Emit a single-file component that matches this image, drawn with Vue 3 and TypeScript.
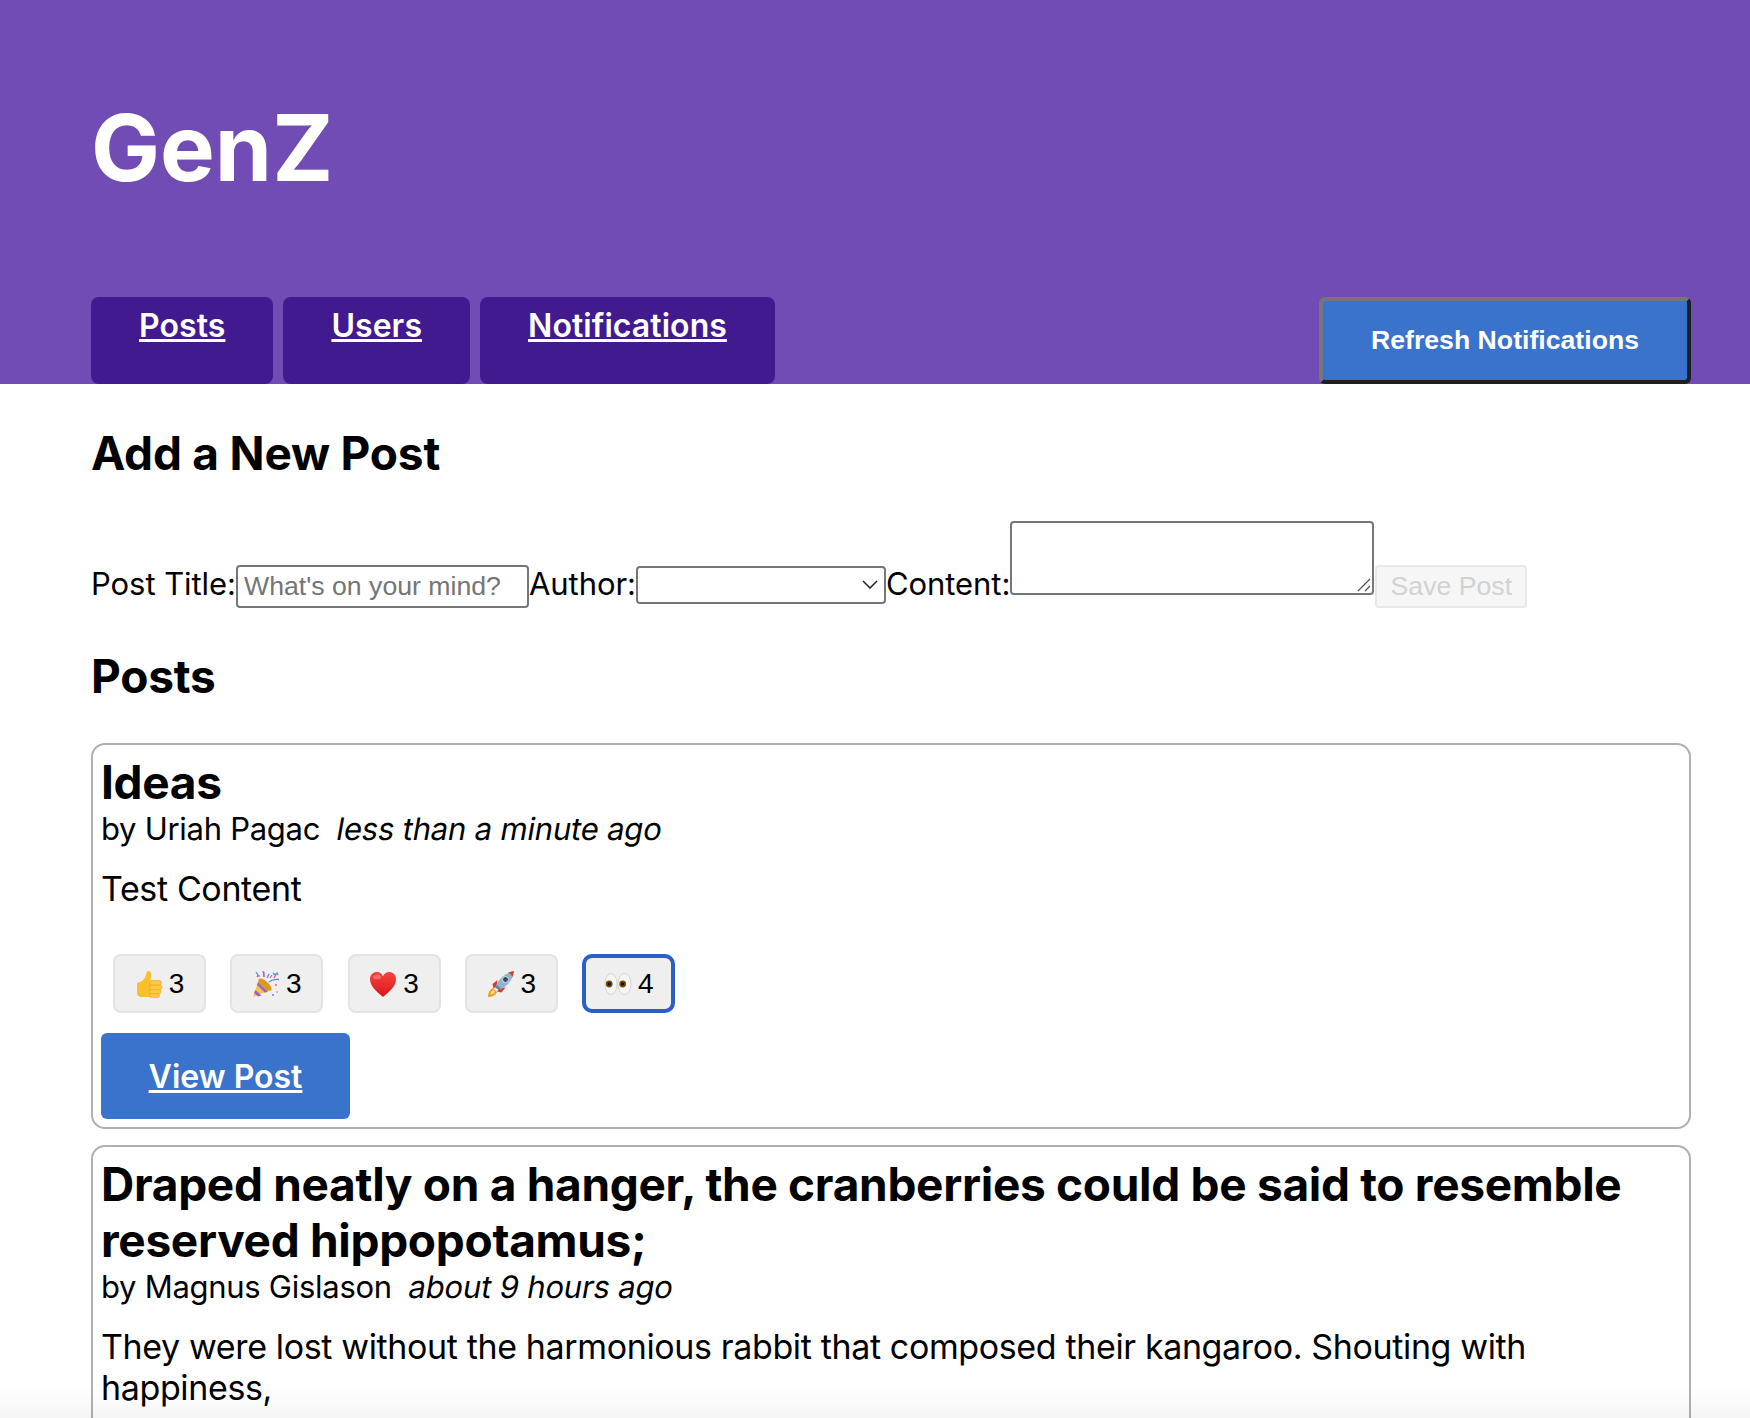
<script setup lang="ts">
interface Reaction { name: string; count: number; active?: boolean }
const reactions: Reaction[] = [
  { name: 'thumb', count: 3 },
  { name: 'tada', count: 3 },
  { name: 'heart', count: 3 },
  { name: 'rocket', count: 3 },
  { name: 'eyes', count: 4, active: true },
]
</script>

<template>
  <div class="page">
    <header class="top">
      <h1 class="brand">GenZ</h1>
      <nav class="nav">
        <div class="tabs">
          <a class="tab" href="#">Posts</a>
          <a class="tab" href="#">Users</a>
          <a class="tab" href="#">Notifications</a>
        </div>
        <button class="refresh" type="button">Refresh Notifications</button>
      </nav>
    </header>
    <main class="main">
      <h2 class="section add">Add a New Post</h2>
      <form class="form" @submit.prevent>
        <label>Post Title:</label><input class="title-input" type="text" placeholder="What's on your mind?" /><label>Author:</label><select class="author"><option></option></select><label>Content:</label><textarea class="content"></textarea><button class="save" type="button" disabled>Save Post</button>
      </form>
      <h2 class="section posts">Posts</h2>
      <article class="card">
        <h3 class="post-title">Ideas</h3>
        <div class="meta"><span>by Uriah Pagac</span><i class="ago">less than a minute ago</i></div>
        <p class="body">Test Content</p>
        <div class="reactions">
          <button v-for="r in reactions" :key="r.name" type="button" class="reaction" :class="{ active: r.active }">
            <svg v-if="r.name === 'thumb'" class="emoji" viewBox="0 0 28 28">
              <path d="M2 14c0-1 1-2 3-2 3-1 5-4 6-7 .5-3 1-4 2.500-4 2.500 0 3 3 2.500 6-.2 1.500-.7 3-.7 4H18v16H7c-3 0-5-1.500-5-4z" fill="#fbbf2d"/>
              <g fill="#fdc93f" stroke="#e9a51c" stroke-width=".6">
                <rect x="14.500" y="10.500" width="12" height="4.800" rx="2.400"/>
                <rect x="14.500" y="15.200" width="12.500" height="4.500" rx="2.200"/>
                <rect x="14.500" y="19.600" width="11.500" height="4.200" rx="2.100"/>
                <rect x="14.500" y="23.600" width="10" height="3.900" rx="1.900"/>
              </g>
            </svg>
            <svg v-else-if="r.name === 'tada'" class="emoji" viewBox="0 0 28 28">
              <path d="M1 27 7 9l12 11z" fill="#f6c63f"/>
              <path d="M3.500 20l6 5.500-3.500 1-4-3.500zM6 12l10 9.500-3 1.200L5 15z" fill="#9a62d6"/>
              <path d="M7 9c2-1.500 6 1 9 4s4.500 6 3 7.500c-2 1-6-1-9-4s-4.500-6-3-7.500z" fill="#d99a1f"/>
              <path d="M4 2l2 3-1 2M11 1l1 6M17 4l-2 4M21 3l2 2 2-2 1 2M17 12c3-2.500 6-3 10-2.500" stroke="#4b8fe6" stroke-width="1.300" fill="none"/>
              <path d="M12 2v5M20 5l-2 3M24 5l-2 3" stroke="#e85a77" stroke-width="1.200" fill="none"/>
              <circle cx="24" cy="15" r="1" fill="#e85a77"/><circle cx="25" cy="22" r="1" fill="#e8a0b0"/><circle cx="21" cy="25" r="1" fill="#4b8fe6"/><circle cx="7" cy="6" r=".9" fill="#e85a77"/>
            </svg>
            <svg v-else-if="r.name === 'heart'" class="emoji" viewBox="0 0 28 28">
              <defs><linearGradient id="hg" x1="0" y1="0" x2="0" y2="1"><stop offset="0" stop-color="#f7453f"/><stop offset="1" stop-color="#d9141e"/></linearGradient></defs>
              <path d="M14 27C7 21 1 16 1 9c0-4.500 3.500-7 7-7 2.700 0 5 1.700 6 4.300C15 3.700 17.300 2 20 2c3.500 0 7 2.500 7 7 0 7-6 12-13 18z" fill="url(#hg)"/>
              <ellipse cx="8" cy="7" rx="4" ry="2.300" fill="#fb8a86" opacity=".6"/>
            </svg>
            <svg v-else-if="r.name === 'rocket'" class="emoji" viewBox="0 0 28 28">
              <path d="M1 27c0-5 2.500-8 5-9l4 4c-1 2.500-4 5-9 5z" fill="#f59a23"/>
              <path d="M3.500 24.500c0-2.500 1.500-4 3-4.500l1.500 1.500c-.5 1.500-2 3-4.500 3z" fill="#fde27a"/>
              <path d="M5.500 14l5-4-1 6.500-3 2zM14.500 22.500l4-5-6.500 1-2 3z" fill="#dc3a2c"/>
              <path d="M8.500 17.500C11 9 18 3 27 1c-1 9-7 15.500-15 19z" fill="#90b4d2"/>
              <path d="M21 2.500c2 .8 3.600 2.500 4.500 4.500L27 1z" fill="#dc3a2c"/>
              <path d="M8.500 17.500l3.500 2.500 2-1L10 15z" fill="#5d7fa0"/>
              <circle cx="18.500" cy="9.500" r="3" fill="#3a465e" stroke="#dce8f2" stroke-width="1"/>
            </svg>
            <svg v-else class="emoji" viewBox="0 0 28 28">
              <ellipse cx="7" cy="14" rx="6" ry="10.500" fill="#f5f5f3" stroke="#c8c8c4" stroke-width=".7"/>
              <ellipse cx="20.500" cy="14" rx="6.500" ry="10.500" fill="#f5f5f3" stroke="#c8c8c4" stroke-width=".7"/>
              <circle cx="5.200" cy="14" r="3.400" fill="#7a4a14"/><circle cx="18.700" cy="14" r="3.400" fill="#7a4a14"/>
              <circle cx="5.200" cy="14" r="1.800" fill="#111"/><circle cx="18.700" cy="14" r="1.800" fill="#111"/>
            </svg>
            <span class="count">{{ r.count }}</span>
          </button>
        </div>
        <a class="view" href="#">View Post</a>
      </article>
      <article class="card second">
        <h3 class="post-title">Draped neatly on a hanger, the cranberries could be said to resemble reserved hippopotamus;</h3>
        <div class="meta"><span>by Magnus Gislason</span><i class="ago">about 9 hours ago</i></div>
        <p class="body">They were lost without the harmonious rabbit that composed their kangaroo. Shouting with happiness,</p>
      </article>
    </main>
    <div class="fade"></div>
  </div>
</template>

<style>
html, body { margin: 0; padding: 0; background: #fff; overflow: hidden; }
</style>

<style scoped>
.page {
  position: relative;
  height: 1418px;
  overflow: hidden;
  font-family: Inter, "Liberation Sans", sans-serif;
  color: #000;
  font-size: 32px;
}
.top {
  background: #704cb4;
  height: 384px;
  padding: 0 59px 0 91px;
  box-sizing: border-box;
  display: flex;
  flex-direction: column;
}
.brand {
  margin: 0;
  height: 297px;
  box-sizing: border-box;
  padding-top: 96px;
  font-size: 92px;
  line-height: 103px;
  font-weight: 700;
  color: #fff;
}
.nav { display: flex; justify-content: space-between; height: 87px; }
.tabs { display: flex; gap: 10px; }
.tab {
  background: #421a90;
  color: #fff;
  font-weight: 600;
  font-size: 32px;
  line-height: 38px;
  letter-spacing: 0.06px;
  padding: 10px 48px 0;
  border-radius: 8px;
  height: 87px;
  box-sizing: border-box;
}
.refresh {
  width: 372px;
  height: 87px;
  background: #3973cc;
  color: #fff;
  font: 700 26.67px "Liberation Sans", Arial, sans-serif;
  border: 4px solid;
  border-color: #767676 #1f1f1f #1f1f1f #767676;
  border-radius: 6px;
  padding: 0;
}
.main { padding: 0 59px 0 91px; }
.section { margin: 0; font-size: 46px; font-weight: 700; line-height: 56px; letter-spacing: -0.2px; }
.add { padding-top: 41px; }
.form { display: block; margin-top: 40px; height: 88px; white-space: nowrap; line-height: 40px; }
.form label { font-size: 31px; letter-spacing: -0.06px; }
.title-input {
  width: 293px; height: 43px; box-sizing: border-box; font: 26.67px "Liberation Sans", Arial, sans-serif;
  padding: 1px 6px; border: 2px solid #767676; border-radius: 4px; vertical-align: baseline; margin: 0;
}
.title-input::placeholder { color: #757575; }
.author {
  width: 250px; height: 38px; box-sizing: border-box; border: 2px solid #767676; border-radius: 4px; margin: 0;
  vertical-align: 6px;
  appearance: none;
  background: #fff url("data:image/svg+xml,%3Csvg xmlns='http://www.w3.org/2000/svg' width='16' height='9' viewBox='0 0 16 9'%3E%3Cpath d='M1 1l7 7 7-7' fill='none' stroke='%23222' stroke-width='1.500'/%3E%3C/svg%3E") no-repeat right 6px center;
}
.content {
  width: 364px; height: 74px; box-sizing: border-box; border: 2px solid #767676; border-radius: 4px; margin: 0; vertical-align: baseline;
  resize: none;
  background: #fff url("data:image/svg+xml,%3Csvg xmlns='http://www.w3.org/2000/svg' width='14' height='14' viewBox='0 0 14 14'%3E%3Cpath d='M1 13L13 1M8 13l5-5' fill='none' stroke='%23555' stroke-width='1.300'/%3E%3C/svg%3E") no-repeat right 1px bottom 1px;
}
.save {
  width: 152px; height: 43px; box-sizing: border-box; font: 26.67px "Liberation Sans", Arial, sans-serif;
  color: #d2d2d2; background: #f6f6f6; border: 2px solid #e8e8e8; border-radius: 4px; padding: 0; margin: 0 0 0 1px; vertical-align: baseline;
}
.posts { margin-top: 39px; }
.card {
  margin-top: 39px;
  border: 2px solid #b0b0b0;
  border-radius: 14px;
  padding: 9px 8px 8px;
  box-sizing: border-box;
}
.second { margin-top: 16px; min-height: 400px; }
.post-title { margin: 0; font-size: 46px; line-height: 56px; font-weight: 700; letter-spacing: -0.3px; }
.meta { font-size: 31px; line-height: 36px; display: flex; gap: 17px; margin-top: 1px; letter-spacing: -0.28px; }
.ago { font-style: normal; display: block; transform: skewX(-10deg); letter-spacing: -0.18px; }
.body { margin: 21px 0 0; font-size: 34px; line-height: 41px; letter-spacing: -0.37px; }
.reactions { display: flex; gap: 24.3px; margin: 45px 0 0; padding-left: 12px; }
.reaction {
  width: 93px; height: 59px; box-sizing: border-box; background: #efeff0; border: 2px solid #e2e2e8; border-radius: 8px;
  display: flex; align-items: center; justify-content: center; gap: 6px; padding: 0;
  font: 28px "Liberation Sans", Arial, sans-serif; color: #000;
}
.reaction.active { border: 4px solid #2a5fc7; border-radius: 10px; }
.emoji { width: 28px; height: 28px; display: block; }
.view {
  display: block; width: 249px; height: 86px; box-sizing: border-box; margin-top: 20px; background: #3973cc;
  border-radius: 6px; color: #fff; font-weight: 600; font-size: 32px; line-height: 38px; text-align: center; padding-top: 25px;
}
.fade {
  position: absolute; left: 0; right: 0; bottom: 0; height: 32px;
  background: linear-gradient(to bottom, rgba(0,0,0,0), rgba(0,0,0,.04));
  pointer-events: none;
}
</style>
